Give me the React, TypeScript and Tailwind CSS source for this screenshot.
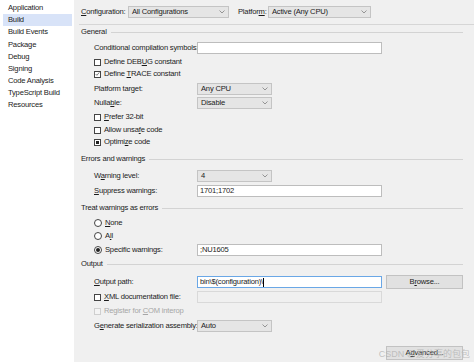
import React from 'react'

const NAV = ['Application', 'Build', 'Build Events', 'Package', 'Debug', 'Signing', 'Code Analysis', 'TypeScript Build', 'Resources']

function U({ children }: { children: React.ReactNode }) {
  return <span className="underline underline-offset-1">{children}</span>
}

function Chevron() {
  return (
    <svg width="6" height="4" viewBox="0 0 6 4" className="shrink-0">
      <polyline points="0.5,0.5 3,3 5.5,0.5" fill="none" stroke="#8a8a8a" strokeWidth="0.9" />
    </svg>
  )
}

function Select({ value, w = 'w-[75px]' }: { value: string; w?: string }) {
  return (
    <div className={`${w} h-[12px] shrink-0 flex items-center justify-between px-[3px] bg-[#e5e5e5] border border-[#c4c4c4]`}>
      <span>{value}</span>
      <Chevron />
    </div>
  )
}

function Input({ value = '', focus = false, disabled = false }: { value?: string; focus?: boolean; disabled?: boolean }) {
  return (
    <div
      className={`w-[185px] h-[12px] shrink-0 flex items-center px-[2px] border ${
        focus ? 'border-[#6aa7e6] bg-white' : disabled ? 'border-[#d9d9d9] bg-[#f0f0f0]' : 'border-[#bdbdbd] bg-white'
      }`}
    >
      {value}
      {focus && <span className="w-px h-[9px] bg-black" />}
    </div>
  )
}

function Box({ state, disabled }: { state?: 'check' | 'fill'; disabled?: boolean }) {
  return (
    <span
      className={`w-[7px] h-[7px] border flex items-center justify-center shrink-0 ${
        disabled ? 'border-[#cfcfcf] bg-[#f4f4f4]' : 'border-[#444] bg-white'
      }`}
    >
      {state === 'fill' && <span className="w-[3px] h-[3px] bg-[#222]" />}
      {state === 'check' && (
        <svg width="6" height="6" viewBox="0 0 6 6">
          <polyline points="0.8,3 2.3,4.6 5.2,1" fill="none" stroke="#555" strokeWidth="0.9" />
        </svg>
      )}
    </span>
  )
}

function Radio({ on }: { on?: boolean }) {
  return (
    <span className="w-[8px] h-[8px] rounded-full border border-[#444] bg-white flex items-center justify-center shrink-0">
      {on && <span className="w-[4px] h-[4px] rounded-full bg-[#222]" />}
    </span>
  )
}

function Header({ title, cls }: { title: string; cls: string }) {
  return (
    <div className={`${cls} h-[12px] flex items-center pl-[7px] pr-[11px] gap-[4px]`}>
      <span>{title}</span>
      <div className="flex-1 h-px bg-[#d3d3d3]" />
    </div>
  )
}

function Field({ label, cls, children }: { label: React.ReactNode; cls: string; children: React.ReactNode }) {
  return (
    <div className={`${cls} h-[14px] flex items-center pl-[20px]`}>
      <div className="w-[103px] shrink-0 flex items-center gap-[3px]">{label}</div>
      {children}
    </div>
  )
}

function CheckRow({ cls, children, state, disabled }: { cls: string; children: React.ReactNode; state?: 'check' | 'fill'; disabled?: boolean }) {
  return (
    <div className={`${cls} h-[12px] flex items-center pl-[20px] gap-[3px] ${disabled ? 'text-[#a6a6a6]' : ''}`}>
      <Box state={state} disabled={disabled} />
      <span>{children}</span>
    </div>
  )
}

function RadioRow({ cls, on, children }: { cls: string; on?: boolean; children: React.ReactNode }) {
  return (
    <div className={`${cls} h-[12px] flex items-center pl-[20px] gap-[3px]`}>
      <Radio on={on} />
      <span>{children}</span>
    </div>
  )
}

export default function App() {
  return (
    <div className="w-[474px] h-[362px] flex overflow-hidden whitespace-nowrap font-['Liberation_Sans',sans-serif] text-[7.6px] tracking-[-0.2px] text-[#1b1b1b] leading-none">
      {/* Left nav */}
      <div className="w-[74px] bg-white pt-[2px] shrink-0">
        {NAV.map(n => (
          <div
            key={n}
            className={`h-[12.1px] ml-[3px] w-[69px] pl-[5px] flex items-center ${n === 'Build' ? 'bg-[#d8e3f8]' : ''}`}
          >
            {n}
          </div>
        ))}
      </div>

      {/* Main */}
      <div className="flex-1 bg-[#f0f0f0] relative flex flex-col">
        <div className="h-[25px] ml-[5px] border-b border-[#d6d6d6] flex items-start pt-[6px] pl-[2px]">
          <div className="h-[12px] flex items-center w-[47px] shrink-0">
            <span><U>C</U>onfiguration:</span>
          </div>
          <Select value="All Configurations" w="w-[101px]" />
          <div className="h-[12px] flex items-center ml-[9px] w-[30px] shrink-0">
            <span>Platfor<U>m</U>:</span>
          </div>
          <Select value="Active (Any CPU)" w="w-[103px]" />
        </div>

        <Header title="General" cls="mt-[1px]" />
        <Field label="Conditional compilation symbols:" cls="mt-[3px]">
          <Input />
        </Field>
        <CheckRow cls="mt-[1px]">Define DEB<U>U</U>G constant</CheckRow>
        <CheckRow cls="mt-0" state="check">Define <U>T</U>RACE constant</CheckRow>
        <Field label="Platform target:" cls="mt-[2px]">
          <Select value="Any CPU" />
        </Field>
        <Field label={<span>Nulla<U>b</U>le:</span>} cls="mt-0">
          <Select value="Disable" />
        </Field>
        <CheckRow cls="mt-[1px]"><U>P</U>refer 32-bit</CheckRow>
        <CheckRow cls="mt-[1px]">Allow unsa<U>f</U>e code</CheckRow>
        <CheckRow cls="mt-0" state="fill">Optimi<U>z</U>e code</CheckRow>

        <Header title="Errors and warnings" cls="mt-[5px]" />
        <Field label={<span>W<U>a</U>rning level:</span>} cls="mt-[4px]">
          <Select value="4" />
        </Field>
        <Field label={<span><U>S</U>uppress warnings:</span>} cls="mt-px">
          <Input value="1701;1702" />
        </Field>

        <Header title="Treat warnings as errors" cls="mt-[4px]" />
        <RadioRow cls="mt-[3px]"><U>N</U>one</RadioRow>
        <RadioRow cls="mt-px">A<U>l</U>l</RadioRow>
        <Field label={<><Radio on /><span>Specific warnings:</span></>} cls="mt-px">
          <Input value=";NU1605" />
        </Field>

        <Header title="Output" cls="mt-[1px]" />
        <div className="mt-[5px] h-[14px] flex items-center pl-[20px]">
          <div className="w-[103px] shrink-0"><U>O</U>utput path:</div>
          <Input value="bin\$(configuration)\" focus />
          <div className="ml-[4px] w-[77px] h-[14px] shrink-0 bg-[#e1e1e1] border border-[#c2c2c2] flex items-center justify-center">
            B<U>r</U>owse...
          </div>
        </div>
        <Field label={<><Box /><span><U>X</U>ML documentation file:</span></>} cls="mt-[1px]">
          <Input disabled />
        </Field>
        <CheckRow cls="mt-[1px]" disabled>Register for <U>C</U>OM interop</CheckRow>
        <Field label={<span>G<U>e</U>nerate serialization assembly:</span>} cls="mt-[2px]">
          <Select value="Auto" />
        </Field>

        <div className="mt-[13px] h-[14px] flex justify-end pr-[11px]">
          <div className="w-[77px] h-[14px] bg-[#e1e1e1] border border-[#c2c2c2] flex items-center justify-center">
            A<U>d</U>vanced...
          </div>
        </div>

        <div className="absolute right-[4px] bottom-[3px] text-[9px] tracking-normal text-[#b4b4b4]/80 font-['Liberation_Sans','Noto_Sans_CJK_SC',sans-serif]">
          CSDN @爱分享的包包
        </div>
      </div>
    </div>
  )
}
